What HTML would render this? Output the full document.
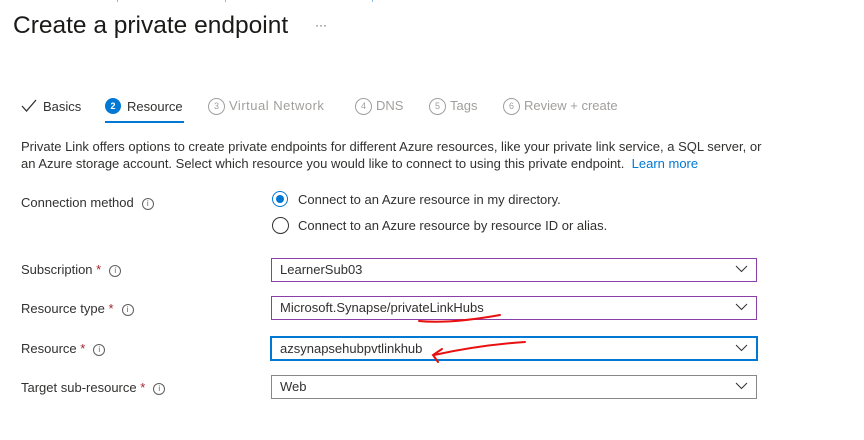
<!DOCTYPE html>
<html><head><meta charset="utf-8"><style>
body{margin:0;width:864px;height:440px;background:#fff;font-family:"Liberation Sans",sans-serif;color:#323130;position:relative;overflow:hidden}
.a{position:absolute;white-space:nowrap}
.t{font-size:13px}
.box{position:absolute;left:271px;width:476px;height:22px;border:1px solid #8a8886;font-size:13px;line-height:22px;padding-left:8px;box-sizing:content-box}
.chev{position:absolute;right:8px;top:6px}
.info{display:inline-block;width:10px;height:10px;border:1px solid #605e5c;border-radius:50%;font-size:8px;line-height:10px;text-align:center;vertical-align:1px;margin-left:8px;color:#605e5c}
.num{display:inline-block;width:15px;height:15px;border:1px solid #a19f9d;border-radius:50%;font-size:9px;line-height:15px;text-align:center;color:#a19f9d;margin-right:4px;vertical-align:1px}
</style></head><body>
<div class="a" style="left:117px;top:0;width:1px;height:2px;background:#8ab8e6"></div>
<div class="a" style="left:225px;top:0;width:1px;height:2px;background:#8ab8e6"></div>
<div class="a" style="left:372px;top:0;width:1px;height:2px;background:#8ab8e6"></div>
<div class="a" style="left:13px;top:12px;font-size:24.5px;color:#1b1a19">Create a private endpoint</div>
<div class="a" style="left:315px;top:18px;font-size:12px;color:#605e5c">···</div>

<svg class="a" style="left:21px;top:99px" width="16" height="14"><path d="M1 7 L5.5 12 L15 1" fill="none" stroke="#323130" stroke-width="1.3"/></svg>
<div class="a t" style="left:43px;top:99px">Basics</div>
<div class="a" style="left:105px;top:98px;width:16px;height:16px;border-radius:50%;background:#0078d4;color:#fff;font-size:9px;font-weight:bold;line-height:16px;text-align:center">2</div>
<div class="a t" style="left:127px;top:99px;color:#323130">Resource</div>
<div class="a" style="left:105px;top:121px;width:79px;height:2px;background:#0078d4"></div>
<div class="a t" style="left:208px;top:98px;color:#a19f9d"><span class="num">3</span><span style="letter-spacing:0.5px">Virtual Network</span></div>
<div class="a t" style="left:355px;top:98px;color:#a19f9d"><span class="num">4</span>DNS</div>
<div class="a t" style="left:429px;top:98px;color:#a19f9d"><span class="num">5</span>Tags</div>
<div class="a t" style="left:503px;top:98px;color:#a19f9d"><span class="num">6</span>Review + create</div>

<div class="a t" style="left:21px;top:138px;line-height:17px">Private Link offers options to create private endpoints for different Azure resources, like your private link service, a SQL server, or<br>an Azure storage account. Select which resource you would like to connect to using this private endpoint. &nbsp;<span style="color:#0078d4">Learn more</span></div>

<div class="a t" style="left:21px;top:195px">Connection method<span class="info">i</span></div>
<div class="a" style="left:272px;top:191px;width:16px;height:16px;border:1px solid #0078d4;border-radius:50%;box-sizing:border-box"></div>
<div class="a" style="left:276px;top:195px;width:8px;height:8px;border-radius:50%;background:#0078d4"></div>
<div class="a t" style="left:298px;top:192px">Connect to an Azure resource in my directory.</div>
<div class="a" style="left:272px;top:217px;width:17px;height:17px;border:1px solid #323130;border-radius:50%;box-sizing:border-box"></div>
<div class="a t" style="left:298px;top:218px">Connect to an Azure resource by resource ID or alias.</div>

<div class="a t" style="left:21px;top:262px">Subscription <span style="color:#a4262c">*</span><span class="info">i</span></div>
<div class="box" style="top:258px;border-color:#8a3fa8">LearnerSub03<svg class="chev" width="13" height="8"><path d="M1 1 L6.5 6.5 L12 1" fill="none" stroke="#323130"/></svg></div>
<div class="a t" style="left:21px;top:301px">Resource type <span style="color:#a4262c">*</span><span class="info">i</span></div>
<div class="box" style="top:296px;border-color:#8a3fa8">Microsoft.Synapse/privateLinkHubs<svg class="chev" width="13" height="8"><path d="M1 1 L6.5 6.5 L12 1" fill="none" stroke="#323130"/></svg></div>
<div class="a t" style="left:21px;top:341px">Resource <span style="color:#a4262c">*</span><span class="info">i</span></div>
<div class="box" style="top:336px;border:2px solid #0078d4;left:270px;height:21px">azsynapsehubpvtlinkhub<svg class="chev" width="13" height="8"><path d="M1 1 L6.5 6.5 L12 1" fill="none" stroke="#323130"/></svg></div>
<div class="a t" style="left:21px;top:380px">Target sub-resource <span style="color:#a4262c">*</span><span class="info">i</span></div>
<div class="box" style="top:375px">Web<svg class="chev" width="13" height="8"><path d="M1 1 L6.5 6.5 L12 1" fill="none" stroke="#323130"/></svg></div>

<svg class="a" style="left:0;top:0" width="864" height="440">
<path d="M419 321 Q450 324 500 315" fill="none" stroke="#e81010" stroke-width="2" stroke-linecap="round"/>
<path d="M434 355 Q480 345 525 342" fill="none" stroke="#e81010" stroke-width="2" stroke-linecap="round"/>
<path d="M442 349 L433 355 L438 362" fill="none" stroke="#e81010" stroke-width="2" stroke-linecap="round"/>
</svg>
</body></html>
